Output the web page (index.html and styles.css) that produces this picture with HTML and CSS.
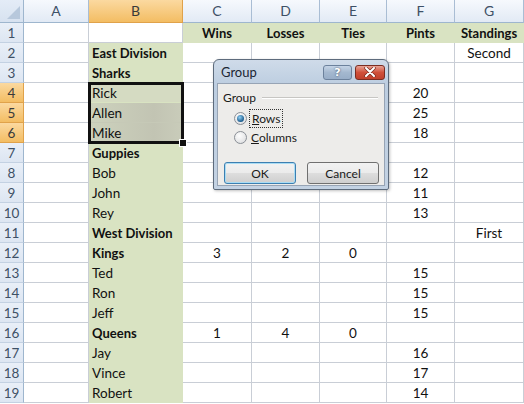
FILE: index.html
```html
<!DOCTYPE html>
<html lang="en">
<head>
    <meta charset="UTF-8">
    <title>Group</title>
    <link rel="stylesheet" href="styles.css">
</head>
<body>
    <div class="sheet">
        <div class="row head">
            <div class="rh corner"><span class="tri"></span></div>
            <div class="ch a">A</div>
            <div class="ch b on">B</div>
            <div class="ch c">C</div>
            <div class="ch d">D</div>
            <div class="ch e">E</div>
            <div class="ch f">F</div>
            <div class="ch g">G</div>
        </div>
        <div class="row">
            <div class="rh">1</div>
            <div class="cell a"></div>
            <div class="cell b"></div>
            <div class="cell c fill bold">Wins</div>
            <div class="cell d fill bold">Losses</div>
            <div class="cell e fill bold">Ties</div>
            <div class="cell f fill bold">Pints</div>
            <div class="cell g fill bold">Standings</div>
        </div>
        <div class="row">
            <div class="rh">2</div>
            <div class="cell a"></div>
            <div class="cell b fill bold">East Division</div>
            <div class="cell c"></div>
            <div class="cell d"></div>
            <div class="cell e"></div>
            <div class="cell f"></div>
            <div class="cell g">Second</div>
        </div>
        <div class="row">
            <div class="rh">3</div>
            <div class="cell a"></div>
            <div class="cell b fill bold">Sharks</div>
            <div class="cell c"></div>
            <div class="cell d"></div>
            <div class="cell e"></div>
            <div class="cell f"></div>
            <div class="cell g"></div>
        </div>
        <div class="row">
            <div class="rh on">4</div>
            <div class="cell a"></div>
            <div class="cell b fill active">Rick</div>
            <div class="cell c"></div>
            <div class="cell d"></div>
            <div class="cell e"></div>
            <div class="cell f">20</div>
            <div class="cell g"></div>
        </div>
        <div class="row">
            <div class="rh on">5</div>
            <div class="cell a"></div>
            <div class="cell b fill picked">Allen</div>
            <div class="cell c"></div>
            <div class="cell d"></div>
            <div class="cell e"></div>
            <div class="cell f">25</div>
            <div class="cell g"></div>
        </div>
        <div class="row">
            <div class="rh on">6</div>
            <div class="cell a"></div>
            <div class="cell b fill picked">Mike</div>
            <div class="cell c"></div>
            <div class="cell d"></div>
            <div class="cell e"></div>
            <div class="cell f">18</div>
            <div class="cell g"></div>
        </div>
        <div class="row">
            <div class="rh">7</div>
            <div class="cell a"></div>
            <div class="cell b fill bold">Guppies</div>
            <div class="cell c"></div>
            <div class="cell d"></div>
            <div class="cell e"></div>
            <div class="cell f"></div>
            <div class="cell g"></div>
        </div>
        <div class="row">
            <div class="rh">8</div>
            <div class="cell a"></div>
            <div class="cell b fill">Bob</div>
            <div class="cell c"></div>
            <div class="cell d"></div>
            <div class="cell e"></div>
            <div class="cell f">12</div>
            <div class="cell g"></div>
        </div>
        <div class="row">
            <div class="rh">9</div>
            <div class="cell a"></div>
            <div class="cell b fill">John</div>
            <div class="cell c"></div>
            <div class="cell d"></div>
            <div class="cell e"></div>
            <div class="cell f">11</div>
            <div class="cell g"></div>
        </div>
        <div class="row">
            <div class="rh">10</div>
            <div class="cell a"></div>
            <div class="cell b fill">Rey</div>
            <div class="cell c"></div>
            <div class="cell d"></div>
            <div class="cell e"></div>
            <div class="cell f">13</div>
            <div class="cell g"></div>
        </div>
        <div class="row">
            <div class="rh">11</div>
            <div class="cell a"></div>
            <div class="cell b fill bold">West Division</div>
            <div class="cell c"></div>
            <div class="cell d"></div>
            <div class="cell e"></div>
            <div class="cell f"></div>
            <div class="cell g">First</div>
        </div>
        <div class="row">
            <div class="rh">12</div>
            <div class="cell a"></div>
            <div class="cell b fill bold">Kings</div>
            <div class="cell c">3</div>
            <div class="cell d">2</div>
            <div class="cell e">0</div>
            <div class="cell f"></div>
            <div class="cell g"></div>
        </div>
        <div class="row">
            <div class="rh">13</div>
            <div class="cell a"></div>
            <div class="cell b fill">Ted</div>
            <div class="cell c"></div>
            <div class="cell d"></div>
            <div class="cell e"></div>
            <div class="cell f">15</div>
            <div class="cell g"></div>
        </div>
        <div class="row">
            <div class="rh">14</div>
            <div class="cell a"></div>
            <div class="cell b fill">Ron</div>
            <div class="cell c"></div>
            <div class="cell d"></div>
            <div class="cell e"></div>
            <div class="cell f">15</div>
            <div class="cell g"></div>
        </div>
        <div class="row">
            <div class="rh">15</div>
            <div class="cell a"></div>
            <div class="cell b fill">Jeff</div>
            <div class="cell c"></div>
            <div class="cell d"></div>
            <div class="cell e"></div>
            <div class="cell f">15</div>
            <div class="cell g"></div>
        </div>
        <div class="row">
            <div class="rh">16</div>
            <div class="cell a"></div>
            <div class="cell b fill bold">Queens</div>
            <div class="cell c">1</div>
            <div class="cell d">4</div>
            <div class="cell e">0</div>
            <div class="cell f"></div>
            <div class="cell g"></div>
        </div>
        <div class="row">
            <div class="rh">17</div>
            <div class="cell a"></div>
            <div class="cell b fill">Jay</div>
            <div class="cell c"></div>
            <div class="cell d"></div>
            <div class="cell e"></div>
            <div class="cell f">16</div>
            <div class="cell g"></div>
        </div>
        <div class="row">
            <div class="rh">18</div>
            <div class="cell a"></div>
            <div class="cell b fill">Vince</div>
            <div class="cell c"></div>
            <div class="cell d"></div>
            <div class="cell e"></div>
            <div class="cell f">17</div>
            <div class="cell g"></div>
        </div>
        <div class="row">
            <div class="rh">19</div>
            <div class="cell a"></div>
            <div class="cell b fill">Robert</div>
            <div class="cell c"></div>
            <div class="cell d"></div>
            <div class="cell e"></div>
            <div class="cell f">14</div>
            <div class="cell g"></div>
        </div>

        <!-- marco de la seleccion B4:B6 -->
        <div class="selection"><span class="handle"></span></div>
    </div>

    <!-- dialogo Group -->
    <div class="dialog">
        <div class="titlebar">
            <span class="title">Group</span>
            <div class="caption-btns">
                <span class="cbtn help">?</span>
                <span class="cbtn close">
                    <svg width="14" height="10" viewBox="0 0 14 10">
                        <path d="M3 1 L11 9 M11 1 L3 9" stroke="#7a2b20" stroke-width="3.4" stroke-linecap="round"/>
                        <path d="M3 1 L11 9 M11 1 L3 9" stroke="#fff" stroke-width="2" stroke-linecap="round"/>
                    </svg>
                </span>
            </div>
        </div>
        <div class="dlg-body">
            <div class="group-label"><span>Group</span><span class="etch"></span></div>
            <div class="options">
                <label class="radio"><span class="dot checked"></span><span class="focus"><u>R</u>ows</span></label>
                <label class="radio"><span class="dot"></span><span><u>C</u>olumns</span></label>
            </div>
            <div class="buttons">
                <span class="btn default">OK</span>
                <span class="btn">Cancel</span>
            </div>
        </div>
    </div>
</body>
</html>
```

FILE: styles.css
```css
body {
    margin: 0;
    font-family: Lato, "Open Sans", sans-serif;
    background: white;
    width: 524px;
    height: 404px;
    overflow: hidden;
    position: relative;
}
.sheet {
    position: relative;
    display: flex;
    flex-direction: column;
    width: 524px;
}
.row {
    display: flex;
    height: 20px;
}
.row.head {
    height: 23px;
}
/* anchos de columna */
.rh { width: 24px; }
.a { width: 65px; }
.b { width: 94px; }
.c { width: 69px; }
.d { width: 68px; }
.e { width: 67px; }
.f { width: 68px; }
.g { width: 69px; }

.rh, .ch, .cell {
    box-sizing: border-box;
    flex-shrink: 0;
    height: 100%;
}
.ch {
    background: linear-gradient(#f6f9fd, #e2eaf5);
    border-right: 1px solid #a9bdd4;
    border-bottom: 1px solid #9eb6ce;
    color: #3e5066;
    font-size: 14px;
    text-align: center;
    line-height: 22px;
}
.rh {
    background: linear-gradient(#e9eff8, #dde6f2);
    border-right: 1px solid #9eb6ce;
    border-bottom: 1px solid #c3d1e2;
    color: #3e5066;
    font-size: 13.5px;
    text-align: center;
    line-height: 20px;
}
.corner {
    position: relative;
    background: linear-gradient(#e4ecf7, #d7e2f0);
    border-bottom: 1px solid #9eb6ce;
}
.tri {
    position: absolute;
    right: 3px;
    bottom: 3px;
    width: 0;
    height: 0;
    border-left: 13px solid transparent;
    border-bottom: 13px solid #b7c8dc;
}
.ch.on, .rh.on {
    background: linear-gradient(#fbd9a0, #f3bd63);
    border-color: #e0a24a;
    color: #3a3a3a;
}
.cell {
    border-right: 1px solid #c9ced6;
    border-bottom: 1px solid #c9ced6;
    font-size: 13.5px;
    line-height: 20px;
    color: #111;
    text-align: center;
    white-space: nowrap;
    overflow: hidden;
}
.cell.b {
    text-align: left;
    padding-left: 3px;
}
.fill {
    background: #d9e3c2;
    border-color: #d9e3c2;
}
.bold {
    font-weight: bold;
    font-size: 13px;
}
.active {
    background: #d5dbc2;
}
.picked {
    background: linear-gradient(90deg, #cdd2bd, #c2c4b3 70%, #c9ccba);
    border-color: #c6c9b7;
}
.selection {
    position: absolute;
    left: 88px;
    top: 82px;
    width: 96px;
    height: 62px;
    box-sizing: border-box;
    border: 3px solid #111;
    pointer-events: none;
}
.handle {
    position: absolute;
    right: -6px;
    bottom: -6px;
    width: 6px;
    height: 6px;
    background: #111;
    border: 1px solid white;
}

/* dialogo */
.dialog {
    position: absolute;
    left: 213px;
    top: 59px;
    width: 176px;
    height: 131px;
    box-sizing: border-box;
    border: 1px solid #5d6b7c;
    border-radius: 6px 6px 2px 2px;
    background: linear-gradient(#cfdbe9, #bccde0 20%, #c3d2e3);
    display: flex;
    flex-direction: column;
    padding: 0 3px 3px;
    box-shadow: 1px 1px 3px rgba(0, 0, 0, 0.25);
}
.titlebar {
    height: 23px;
    display: flex;
    align-items: center;
    justify-content: space-between;
    padding-left: 4px;
}
.title {
    font-family: Lato, sans-serif;
    font-size: 13px;
    color: #1b2633;
}
.caption-btns {
    display: flex;
    gap: 3px;
    margin-top: 1px;
}
.cbtn {
    width: 29px;
    height: 15px;
    box-sizing: border-box;
    border-radius: 3px;
    display: flex;
    align-items: center;
    justify-content: center;
}
.help {
    background: linear-gradient(#c5d4e6, #a4b8cf 50%, #98aec8);
    border: 1px solid #6c819c;
    color: white;
    font-family: "DejaVu Sans", sans-serif;
    font-weight: bold;
    font-size: 11px;
    text-shadow: 0 0 2px #2d3f57;
}
.close {
    width: 30px;
    background: linear-gradient(#e8a295, #d0503a 50%, #c0402c);
    border: 1px solid #7a2d22;
}
.dlg-body {
    flex: 1;
    background: #edecea;
    border: 1px solid #97a4b5;
    padding: 6px 5px 0;
    font-family: Lato, sans-serif;
    font-size: 12px;
    color: #1a1a1a;
}
.group-label {
    display: flex;
    align-items: center;
    gap: 6px;
}
.etch {
    flex: 1;
    height: 0;
    border-top: 1px solid #c7c6c3;
    border-bottom: 1px solid #fff;
    margin-right: 1px;
}
.options {
    display: flex;
    flex-direction: column;
    gap: 3px;
    padding: 5px 0 0 11px;
}
.radio {
    display: flex;
    align-items: center;
    gap: 4px;
    height: 16px;
}
.dot {
    width: 11px;
    height: 11px;
    border-radius: 50%;
    border: 1px solid #8a8f96;
    background: radial-gradient(circle at 40% 35%, #fdfdfd, #d8d9db);
    position: relative;
}
.dot.checked::after {
    content: "";
    position: absolute;
    left: 2px;
    top: 2px;
    width: 7px;
    height: 7px;
    border-radius: 50%;
    background: radial-gradient(circle at 40% 35%, #8fd0f5, #1d5c8d 70%);
}
.focus {
    outline: 1px dotted #333;
    outline-offset: 1px;
    padding: 0 1px;
}
.buttons {
    display: flex;
    gap: 11px;
    padding: 17px 0 0 1px;
}
.btn {
    width: 73px;
    height: 22px;
    box-sizing: border-box;
    border: 1px solid #707070;
    border-radius: 3px;
    background: linear-gradient(#f2f2f2, #ebebeb 48%, #dddddd 52%, #cfcfcf);
    display: flex;
    align-items: center;
    justify-content: center;
}
.btn.default {
    border-color: #3c7fb1;
    box-shadow: inset 0 0 0 1px #a9dcf4;
}
```
